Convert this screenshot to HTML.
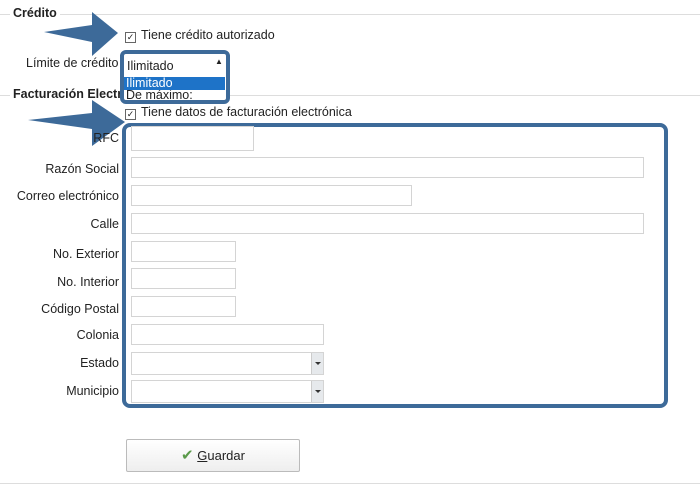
<!DOCTYPE html><html><head><style>
body{margin:0;width:700px;height:485px;background:#fff;position:relative;overflow:hidden;font-family:"Liberation Sans","DejaVu Sans",sans-serif;font-size:12.5px;color:#222}
.a{position:absolute}
.lbl{position:absolute;right:581px;text-align:right;white-space:nowrap}
.in{position:absolute;left:131px;height:21px;border:1px solid #d4d4d4;background:#fff;box-sizing:border-box}
.dd{position:absolute;right:0;top:0;width:11px;height:100%;background:#e6e9ec;border-left:1px solid #ccc}
.dd:after{content:"";position:absolute;left:3px;top:9px;border:3px solid transparent;border-top:3px solid #333;border-bottom:0}
.cb{display:inline-block;width:9px;height:9px;border:1px solid #666;vertical-align:-1px;margin-right:5px;font-size:9px;line-height:9px;text-align:center}
</style></head><body>
<div class="a" style="left:0;top:14px;width:700px;border-top:1px solid #ddd"></div>
<div class="a" style="left:10px;top:6px;background:#fff;padding:0 3px;font-weight:bold">Crédito</div>
<div class="a" style="left:0;top:95px;width:700px;border-top:1px solid #ddd"></div>
<div class="a" style="left:10px;top:87px;background:#fff;padding:0 3px;font-weight:bold">Facturación Electrónica</div>
<svg class="a" style="left:0;top:0" width="140" height="160"><path d="M44,32 L92,25 L92,12 L118,33 L92,56 L92,42 Z" fill="#3d6a99"/><path d="M28,120 L92,113 L92,100 L125,122 L92,146 L92,129 Z" fill="#3d6a99"/></svg>
<div class="a" style="left:125px;top:28px;background:#fff;padding-right:2px"><span class="cb">✓</span>Tiene crédito autorizado</div>
<div class="a" style="left:26px;top:56px">Límite de crédito</div>
<div class="a" style="left:120px;top:50px;width:110px;height:54px;border:4px solid #3d6a99;border-radius:6px;box-sizing:border-box;background:#fff"></div>
<div class="a" style="left:124px;top:56px;width:100px;height:20px;line-height:20px;padding-left:3px">Ilimitado</div>
<div class="a" style="left:215px;top:57px;font-size:8px">▲</div>
<div class="a" style="left:124px;top:77px;width:101px;height:13px;background:#1e73c8;color:#fff;line-height:13px;padding-left:2px;box-sizing:border-box">Ilimitado</div>
<div class="a" style="left:126px;top:90px;line-height:11px;height:10px;overflow:hidden">De máximo:</div>
<div class="a" style="left:125px;top:105px;background:#fff;padding-right:2px"><span class="cb">✓</span>Tiene datos de facturación electrónica</div>
<div class="a" style="left:122px;top:123px;width:546px;height:285px;border:4px solid #3d6a99;border-radius:8px;box-sizing:border-box"></div>
<div class="lbl" style="top:131px">RFC</div><div class="in" style="top:126px;width:123px;height:25px"></div>
<div class="lbl" style="top:162px">Razón Social</div><div class="in" style="top:157px;width:513px"></div>
<div class="lbl" style="top:189px">Correo electrónico</div><div class="in" style="top:185px;width:281px"></div>
<div class="lbl" style="top:217px">Calle</div><div class="in" style="top:213px;width:513px"></div>
<div class="lbl" style="top:247px">No. Exterior</div><div class="in" style="top:241px;width:105px"></div>
<div class="lbl" style="top:275px">No. Interior</div><div class="in" style="top:268px;width:105px"></div>
<div class="lbl" style="top:302px">Código Postal</div><div class="in" style="top:296px;width:105px"></div>
<div class="lbl" style="top:328px">Colonia</div><div class="in" style="top:324px;width:193px"></div>
<div class="lbl" style="top:356px">Estado</div><div class="in" style="top:352px;width:193px;height:23px"><div class="dd"></div></div>
<div class="lbl" style="top:384px">Municipio</div><div class="in" style="top:380px;width:193px;height:23px"><div class="dd"></div></div>
<div class="a" style="left:126px;top:439px;width:174px;height:33px;border:1px solid #bbb;border-radius:2px;box-sizing:border-box;background:linear-gradient(#fff,#eee);text-align:center;line-height:31px;font-size:13px"><span style="color:#5a9a4a;font-size:15px">✔</span> <u>G</u>uardar</div>
<div class="a" style="left:0;top:483px;width:700px;border-top:1px solid #ddd"></div>
</body></html>
